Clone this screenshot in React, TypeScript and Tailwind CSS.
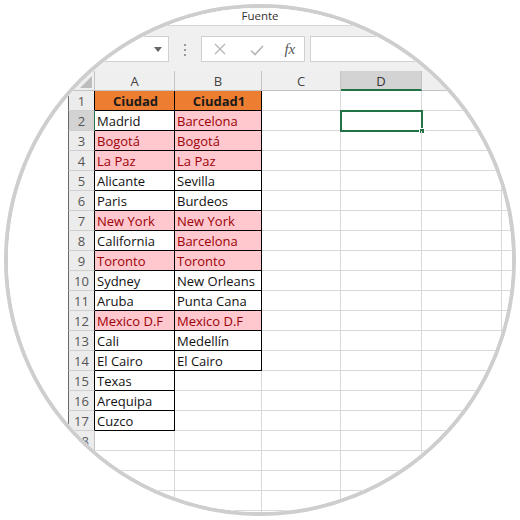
import React from "react";

const colA = ["Ciudad","Madrid","Bogotá","La Paz","Alicante","Paris","New York","California","Toronto","Sydney","Aruba","Mexico D.F","Cali","El Cairo","Texas","Arequipa","Cuzco"];
const colB = ["Ciudad1","Barcelona","Bogotá","La Paz","Sevilla","Burdeos","New York","Barcelona","Toronto","New Orleans","Punta Cana","Mexico D.F","Medellín","El Cairo"];
const pinkA = [3, 4, 7, 9, 12];
const pinkB = [2, 3, 4, 7, 8, 9, 12];
const rows = Array.from({ length: 22 }, (_, i) => i + 1);

function Cell({ row, col }: { row: number; col: "A" | "B" }) {
  const data = col === "A" ? colA : colB;
  const pink = col === "A" ? pinkA : pinkB;
  const inTable = row <= data.length;
  const text = inTable ? data[row - 1] : "";
  const isHead = row === 1;
  const isPink = pink.includes(row);
  const w = col === "A" ? "w-[80px]" : "w-[87px]";
  let cls = `${w} h-[20px] shrink-0 border-r border-b pl-[2px] leading-[21px] whitespace-nowrap overflow-hidden `;
  if (inTable) cls += "border-black ";
  else cls += "border-[#d9d9d9] ";
  if (isHead) cls += "bg-[#ED7D31] font-bold text-center text-[#1a1a1a] ";
  else if (isPink) cls += "bg-[#FFC7CE] text-[#9C0006] ";
  else cls += "bg-white text-[#111] ";
  return <div className={cls}>{text}</div>;
}

export default function App() {
  return (
    <div className="w-[520px] h-[520px] bg-white overflow-hidden" style={{ fontFamily: '"Open Sans", "Noto Sans", sans-serif' }}>
      <div className="w-[512px] h-[512px] ml-[4px] mt-[4px] rounded-full border-4 border-[#cecece] overflow-hidden">
        <div className="w-[520px] h-[520px] -ml-[8px] -mt-[8px] flex flex-col bg-white">
          {/* ribbon group label */}
          <div className="h-[25px] shrink-0 bg-white flex items-center justify-center pt-[6px] text-[11.5px] text-[#333]">
            Fuente
          </div>
          <div className="h-[1px] shrink-0 bg-[#d6d6d6]" />
          {/* formula bar */}
          <div className="h-[45px] shrink-0 bg-[#f0f0f0] flex items-start pt-[10px]">
            <div className="ml-[40px] w-[135px] h-[26px] bg-white border border-[#d0d0d0] flex items-center justify-end pr-[6px]">
              <svg width="8" height="5" viewBox="0 0 8 5"><path d="M0 0 L8 0 L4 5 Z" fill="#666" /></svg>
            </div>
            <div className="ml-[15px] mt-[8px] flex flex-col gap-[3px]">
              <div className="w-[2px] h-[2px] bg-[#9a9a9a]" />
              <div className="w-[2px] h-[2px] bg-[#9a9a9a]" />
              <div className="w-[2px] h-[2px] bg-[#9a9a9a]" />
            </div>
            <div className="ml-[15px] w-[108px] h-[26px] bg-white border border-[#d0d0d0] flex items-center">
              <svg className="ml-[12px]" width="12" height="12" viewBox="0 0 12 12"><path d="M1 1 L11 11 M11 1 L1 11" stroke="#b5b5b5" strokeWidth="1.3" /></svg>
              <svg className="ml-[24px] mt-[2px]" width="14" height="11" viewBox="0 0 14 11"><path d="M1 5.5 L5 9.5 L13 1" stroke="#b5b5b5" strokeWidth="1.6" fill="none" /></svg>
              <span className="ml-[20px] italic text-[15px] text-[#555] leading-none" style={{ fontFamily: '"Liberation Serif", serif' }}>fx</span>
            </div>
            <div className="ml-[5px] w-[220px] h-[26px] bg-white border border-[#d0d0d0]" />
          </div>
          {/* column headers */}
          <div className="h-[20px] shrink-0 flex bg-[#efefef] text-[13px] text-[#444] leading-[21px]">
            <div className="ml-[68px] w-[27px] shrink-0 border-r border-b border-[#c4c4c4] flex items-end justify-end pr-[2px] pb-[2px]">
              <svg width="12" height="12" viewBox="0 0 12 12"><path d="M12 0 L12 12 L0 12 Z" fill="#bdbdbd" /></svg>
            </div>
            <div className="w-[80px] shrink-0 border-r border-b border-[#c4c4c4] text-center">A</div>
            <div className="w-[87px] shrink-0 border-r border-b border-[#c4c4c4] text-center">B</div>
            <div className="w-[79px] shrink-0 border-r border-b border-[#c4c4c4] text-center">C</div>
            <div className="w-[81px] shrink-0 border-r border-[#c4c4c4] border-b-2 border-b-[#217346] bg-[#d3d3d3] text-center text-[#333]">D</div>
            <div className="w-[80px] shrink-0 border-r border-b border-[#c4c4c4]" />
            <div className="w-[80px] shrink-0 border-b border-[#c4c4c4]" />
          </div>
          {/* rows */}
          {rows.map((r) => (
            <div key={r} className="h-[20px] shrink-0 flex text-[13px]">
              <div
                className={`ml-[68px] w-[27px] h-[20px] shrink-0 border-l border-l-[#666] border-b border-b-[#cfcfcf] border-r text-center leading-[21px] text-[#555] ${
                  r === 2 ? "bg-[#d3d3d3] border-r-[#217346]" : r <= 17 ? "bg-[#ececec] border-r-black" : "bg-[#ececec] border-r-[#c4c4c4]"
                }`}
              >
                {r <= 21 ? r : ""}
              </div>
              <Cell row={r} col="A" />
              <Cell row={r} col="B" />
              <div className="w-[79px] h-[20px] shrink-0 border-r border-b border-[#d9d9d9]" />
              <div className="relative w-[81px] h-[20px] shrink-0 border-r border-b border-[#d9d9d9]">
                {r === 2 && (
                  <div className="absolute -left-[1px] -top-[1px] w-[83px] h-[22px] border-2 border-[#217346]">
                    <div className="absolute -right-[4px] -bottom-[4px] w-[6px] h-[6px] bg-[#217346] border border-white" />
                  </div>
                )}
              </div>
              <div className="w-[80px] h-[20px] shrink-0 border-r border-b border-[#d9d9d9]" />
              <div className="w-[80px] h-[20px] shrink-0 border-b border-[#d9d9d9]" />
            </div>
          ))}
        </div>
      </div>
    </div>
  );
}
